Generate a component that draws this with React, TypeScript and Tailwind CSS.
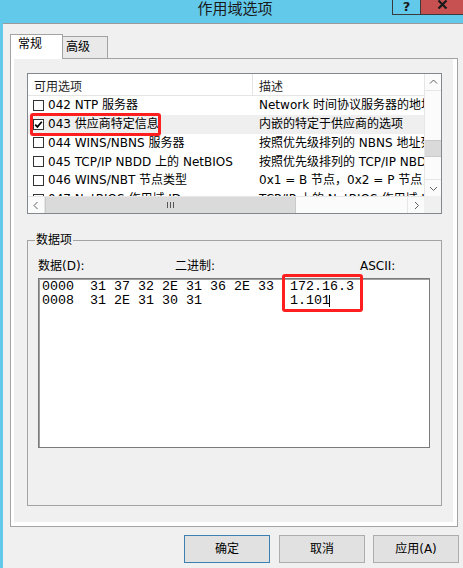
import React from "react";

type Option = { code: string; desc: string; checked?: boolean; selected?: boolean };

const options: Option[] = [
  { code: "042 NTP 服务器", desc: "Network 时间协议服务器的地址" },
  { code: "043 供应商特定信息", desc: "内嵌的特定于供应商的选项", checked: true, selected: true },
  { code: "044 WINS/NBNS 服务器", desc: "按照优先级排列的 NBNS 地址列表" },
  { code: "045 TCP/IP NBDD 上的 NetBIOS", desc: "按照优先级排列的 TCP/IP NBDD 地址列表" },
  { code: "046 WINS/NBT 节点类型", desc: "0x1 = B 节点，0x2 = P 节点，0x4 = M 节点，0x8 = H 节点" },
  { code: "047 NetBIOS 作用域 ID", desc: "TCP/IP 上的 NetBIOS 作用域 ID" },
];

const chevronPoints = {
  up: "1,5.5 4.5,2 8,5.5",
  down: "1,3 4.5,6.5 8,3",
  left: "5.5,1 2,4.5 5.5,8",
  right: "3,1 6.5,4.5 3,8",
};

function Chevron({ dir }: { dir: keyof typeof chevronPoints }) {
  return (
    <svg width="9" height="9" viewBox="0 0 9 9">
      <polyline points={chevronPoints[dir]} fill="none" stroke="#606060" strokeWidth="1" />
    </svg>
  );
}

function CheckBox({ checked }: { checked?: boolean }) {
  return (
    <span className="flex h-[11px] w-[11px] shrink-0 items-center justify-center border border-[#333333] bg-white">
      {checked && (
        <svg width="9" height="9" viewBox="0 0 9 9">
          <polyline points="1.2,4.6 3.4,6.9 7.8,1.8" fill="none" stroke="#000000" strokeWidth="1.7" />
        </svg>
      )}
    </span>
  );
}

function OptionRow({ opt }: { opt: Option }) {
  return (
    <div
      className={
        opt.selected
          ? "relative flex h-[18.75px] items-center whitespace-nowrap bg-[#efefef]"
          : "relative flex h-[18.75px] items-center whitespace-nowrap"
      }
    >
      <div className="flex w-[225px] shrink-0 items-center gap-[4px] overflow-hidden pl-[5px]">
        <CheckBox checked={opt.checked} />
        <span>{opt.code}</span>
      </div>
      <div className="overflow-hidden pl-[6px]">{opt.desc}</div>
      {opt.selected && (
        <div className="pointer-events-none absolute left-[2px] top-[-2px] h-[23px] w-[131px] rounded-[3px] border-[3px] border-[#ff1f1f]" />
      )}
    </div>
  );
}

function OptionList() {
  return (
    <div className="ml-[13px] mt-[14px] w-[415px] border border-[#828790] bg-white">
      <div className="grid grid-cols-[396px_17px] grid-rows-[122px_17px]">
        {/* header + rows */}
        <div className="overflow-hidden text-[12px] leading-[16px] text-black">
          <div className="flex h-[22px] border-b border-[#e5e5e5] text-[#1e1e1e]">
            <div className="w-[225px] shrink-0 border-r border-[#e5e5e5] pl-[6px] pt-[5px]">可用选项</div>
            <div className="pl-[6px] pt-[5px]">描述</div>
          </div>
          {options.map((o) => (
            <OptionRow key={o.code} opt={o} />
          ))}
        </div>

        {/* vertical scrollbar */}
        <div className="flex flex-col border-l border-[#e6e6e6] bg-[#fbfbfb]">
          <div className="flex h-[17px] items-center justify-center border-b border-[#e6e6e6]">
            <Chevron dir="up" />
          </div>
          <div className="flex-1">
            <div className="mt-[49px] h-[17px] border-y border-[#c9c9c9] bg-[#dadada]" />
          </div>
          <div className="flex h-[17px] items-center justify-center border-t border-[#e6e6e6]">
            <Chevron dir="down" />
          </div>
        </div>

        {/* horizontal scrollbar */}
        <div className="flex border-t border-[#e6e6e6] bg-[#fbfbfb]">
          <div className="flex w-[17px] items-center justify-center border-r border-[#e6e6e6]">
            <Chevron dir="left" />
          </div>
          <div className="flex w-[251px] items-center justify-center gap-[2px] border-x border-[#c9c9c9] bg-[#dadada]">
            <span className="h-[6px] w-px bg-[#555555]" />
            <span className="h-[6px] w-px bg-[#555555]" />
            <span className="h-[6px] w-px bg-[#555555]" />
          </div>
          <div className="flex-1" />
          <div className="flex w-[17px] items-center justify-center border-l border-[#e6e6e6]">
            <Chevron dir="right" />
          </div>
        </div>
        <div className="bg-[#f0f0f0]" />
      </div>
    </div>
  );
}

function DataGroup() {
  return (
    <fieldset className="ml-[13px] mt-[18px] h-[274px] w-[415px] border border-[#a3a3a3]">
      <legend className="ml-[7px] px-[1px] text-[12px] leading-[16px] text-black">数据项</legend>
      <div className="pl-[10px]">
        <div className="mt-[10px] flex h-[16px] text-[12px] leading-[16px] text-black">
          <span className="w-[137px]">数据(D):</span>
          <span className="w-[185px]">二进制:</span>
          <span>ASCII:</span>
        </div>
        <div className="relative mt-[4px] w-[392px]">
          <div className="h-[170px] border border-[#7a7a7a] bg-white pl-[3px] pt-[1px] shadow-[inset_1px_1px_0_#a0a0a0] font-['Liberation_Mono','Courier_New',monospace] text-[13.333px] leading-[14px] text-black">
            <div className="whitespace-pre">0000  31 37 32 2E 31 36 2E 33  172.16.3</div>
            <div className="flex whitespace-pre">
              <span>0008  31 2E 31 30 31           1.101</span>
              <span className="ml-[-1px] mt-[1px] h-[12px] w-px bg-black" />
            </div>
          </div>
          <div className="pointer-events-none absolute left-[244px] top-[-4px] h-[38px] w-[81px] rounded-[3px] border-[3px] border-[#ff1f1f]" />
        </div>
      </div>
    </fieldset>
  );
}

export default function App() {
  return (
    <div className="flex h-[568px] w-[463px] flex-col overflow-hidden bg-[#63c9ea] font-['DejaVu_Sans','Noto_Sans_CJK_SC',sans-serif] text-black">
      {/* title bar */}
      <div className="relative flex h-[23px] shrink-0 justify-center pl-[7px]">
        <span className="text-[15px] leading-[18px] text-[#1a1a1a]">作用域选项</span>
        <div className="absolute right-0 top-0 flex h-[15px]">
          <div className="flex w-[29px] items-start justify-center border-x border-b border-[#3a3a3a] text-[13px] font-bold leading-[13px] text-[#1a1a1a]">
            ?
          </div>
          <div className="flex w-[42px] items-start justify-center border-b border-[#3a3a3a] bg-[#c75050]">
            <svg width="11" height="9" viewBox="0 0 11 9">
              <path d="M1.5 0.5 L9.5 8.5 M9.5 0.5 L1.5 8.5" stroke="#1a1a1a" strokeWidth="2.2" />
            </svg>
          </div>
        </div>
      </div>

      <div className="flex flex-1">
        <div className="w-[3px] shrink-0" />
        <div className="flex flex-1 flex-col border-t border-[#9a9a9a] bg-[#f0f0f0] pt-[10px]">
          {/* tabs */}
          <div className="relative z-10 -mb-px ml-[7px] flex items-end text-[12px] leading-[16px]">
            <div className="h-[25px] w-[53px] border-x border-t border-[#a3a3a3] bg-white pl-[7px] pt-[1px]">常规</div>
            <div className="mb-px h-[22px] w-[45px] border-r border-t border-[#a3a3a3] bg-[#e9e9e9] pl-[3px] pt-[2px]">高级</div>
          </div>

          {/* tab page */}
          <div className="ml-[7px] h-[469px] w-[448px] border border-[#a3a3a3] bg-white pb-[4px] pl-[3px] pr-[4px]">
            <div className="flex h-full flex-col bg-[#f0f0f0]">
              <OptionList />
              <DataGroup />
            </div>
          </div>

          {/* dialog buttons */}
          <div className="mt-[8px] flex justify-end pr-[4px] text-[12px] leading-[16px]">
            <button className="flex h-[28px] w-[86px] items-center justify-center border border-[#3c7fb1] bg-[#e1e1e1]">确定</button>
            <button className="ml-[9px] flex h-[28px] w-[86px] items-center justify-center border border-[#adadad] bg-[#e1e1e1]">取消</button>
            <button className="ml-[8px] flex h-[28px] w-[86px] items-center justify-center border border-[#adadad] bg-[#e1e1e1]">应用(A)</button>
          </div>
        </div>
      </div>
    </div>
  );
}
